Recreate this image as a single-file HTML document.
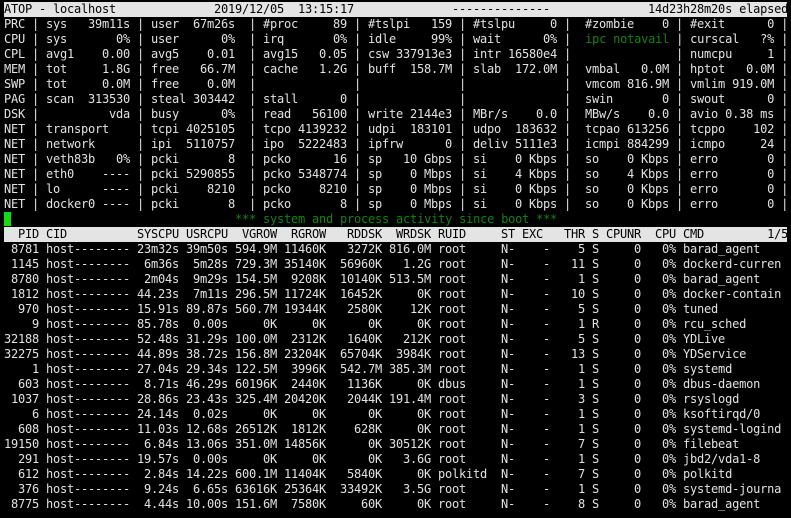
<!DOCTYPE html>
<html><head><meta charset="utf-8"><style>
html,body{margin:0;padding:0;background:#000;width:791px;height:518px;overflow:hidden}
pre{position:absolute;left:4px;top:2px;margin:0;font-family:"DejaVu Sans Mono","Liberation Mono",monospace;font-size:12px;letter-spacing:-0.224px;line-height:15px;color:#e2e2e2;white-space:pre}
.bar{background:#e4e4e4;color:#000;display:inline-block;width:783px}
.g{color:#1a7f1a}
.cur{background:#16d916;color:#16d916}
</style></head><body>
<pre><span class="bar">ATOP - localhost              2019/12/05  13:15:17              --------------              14d23h28m20s elapsed</span>
PRC | sys   39m11s | user  67m26s  | #proc     89 | #tslpi   159 | #tslpu     0 |  #zombie    0 | #exit      0 |
CPU | sys       0% | user      0%  | irq       0% | idle     99% | wait      0% |  <span class="g">ipc notavail</span> | curscal   ?% |
CPL | avg1    0.00 | avg5    0.01  | avg15   0.05 | csw 337913e3 | intr 16580e4 |               | numcpu     1 |
MEM | tot     1.8G | free   66.7M  | cache   1.2G | buff  158.7M | slab  172.0M |  vmbal   0.0M | hptot   0.0M |
SWP | tot     0.0M | free    0.0M  |              |              |              |  vmcom 816.9M | vmlim 919.0M |
PAG | scan  313530 | steal 303442  | stall      0 |              |              |  swin       0 | swout      0 |
DSK |          vda | busy      0%  | read   56100 | write 2144e3 | MBr/s    0.0 |  MBw/s    0.0 | avio 0.38 ms |
NET | transport    | tcpi 4025105  | tcpo 4139232 | udpi  183101 | udpo  183632 |  tcpao 613256 | tcppo    102 |
NET | network      | ipi  5110757  | ipo  5222483 | ipfrw      0 | deliv 5111e3 |  icmpi 884299 | icmpo     24 |
NET | veth83b   0% | pcki       8  | pcko      16 | sp   10 Gbps | si    0 Kbps |  so    0 Kbps | erro       0 |
NET | eth0    ---- | pcki 5290855  | pcko 5348774 | sp    0 Mbps | si    4 Kbps |  so    4 Kbps | erro       0 |
NET | lo      ---- | pcki    8210  | pcko    8210 | sp    0 Mbps | si    0 Kbps |  so    0 Kbps | erro       0 |
NET | docker0 ---- | pcki       8  | pcko       8 | sp    0 Mbps | si    0 Kbps |  so    0 Kbps | erro       0 |
<span class="cur">_</span>                                <span class="g">*** system and process activity since boot ***</span>
<span class="bar">  PID CID          SYSCPU USRCPU  VGROW  RGROW   RDDSK  WRDSK RUID     ST EXC   THR S CPUNR  CPU CMD         1/5</span>
 8781 host-------- 23m32s 39m50s 594.9M 11460K   3272K 816.0M root     N-    -    5 S     0   0% barad_agent
 1145 host--------  6m36s  5m28s 729.3M 35140K  56960K   1.2G root     N-    -   11 S     0   0% dockerd-curren
 8780 host--------  2m04s  9m29s 154.5M  9208K  10140K 513.5M root     N-    -    1 S     0   0% barad_agent
 1812 host-------- 44.23s  7m11s 296.5M 11724K  16452K     0K root     N-    -   10 S     0   0% docker-contain
  970 host-------- 15.91s 89.87s 560.7M 19344K   2580K    12K root     N-    -    5 S     0   0% tuned
    9 host-------- 85.78s  0.00s     0K     0K      0K     0K root     N-    -    1 R     0   0% rcu_sched
32188 host-------- 52.48s 31.29s 100.0M  2312K   1640K   212K root     N-    -    5 S     0   0% YDLive
32275 host-------- 44.89s 38.72s 156.8M 23204K  65704K  3984K root     N-    -   13 S     0   0% YDService
    1 host-------- 27.04s 29.34s 122.5M  3996K  542.7M 385.3M root     N-    -    1 S     0   0% systemd
  603 host--------  8.71s 46.29s 60196K  2440K   1136K     0K dbus     N-    -    1 S     0   0% dbus-daemon
 1037 host-------- 28.86s 23.43s 325.4M 20420K   2044K 191.4M root     N-    -    3 S     0   0% rsyslogd
    6 host-------- 24.14s  0.02s     0K     0K      0K     0K root     N-    -    1 S     0   0% ksoftirqd/0
  608 host-------- 11.03s 12.68s 26512K  1812K    628K     0K root     N-    -    1 S     0   0% systemd-logind
19150 host--------  6.84s 13.06s 351.0M 14856K      0K 30512K root     N-    -    7 S     0   0% filebeat
  291 host-------- 19.57s  0.00s     0K     0K      0K   3.6G root     N-    -    1 S     0   0% jbd2/vda1-8
  612 host--------  2.84s 14.22s 600.1M 11404K   5840K     0K polkitd  N-    -    7 S     0   0% polkitd
  376 host--------  9.24s  6.65s 63616K 25364K  33492K   3.5G root     N-    -    1 S     0   0% systemd-journa
 8775 host--------  4.44s 10.00s 151.6M  7580K     60K     0K root     N-    -    8 S     0   0% barad_agent</pre>
</body></html>
